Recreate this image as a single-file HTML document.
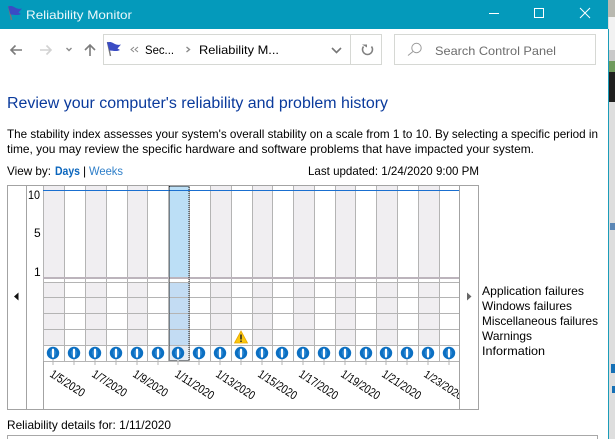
<!DOCTYPE html>
<html><head><meta charset="utf-8"><style>
html,body{margin:0;padding:0;width:615px;height:439px;overflow:hidden;background:#fff}
svg{display:block}
text{font-family:"Liberation Sans",sans-serif;font-size:12px;fill:#000}
</style></head><body>
<svg width="615" height="439" viewBox="0 0 615 439" xmlns="http://www.w3.org/2000/svg">
<defs>
<g id="i"><path d="M0 6V12" stroke="#b5b5b5" stroke-width="1"/><circle r="6.2" fill="#0b6fc2"/><circle r="3.2" fill="#2a86d2"/><rect x="-1.1" y="-4.4" width="2.2" height="9" rx="1" fill="#fff"/></g>
<g id="fl"><path d="M2.5 1L5.5 15" stroke="#777" stroke-width="1.4" fill="none"/><path d="M2 1.5C6 0 8 2 10 3C12 4 14 4 16 3.5L12.5 7.5L15 9C11 11 8 9.5 4.5 9.5Z" fill="#3a4cc4"/></g>
</defs>
<rect width="615" height="439" fill="#fff"/>
<!-- outside strip -->
<rect x="608" y="0" width="7" height="439" fill="#dedede"/>
<rect x="608" y="0" width="7" height="17" fill="#b9b9b0"/>
<rect x="609" y="17" width="6" height="33" fill="#f2f2f2"/>
<rect x="609" y="50" width="6" height="11" fill="#c9c9c9"/>
<rect x="609" y="61" width="6" height="11" fill="#6f9a5c"/>
<rect x="609" y="72" width="6" height="30" fill="#20201f"/>
<rect x="610" y="223" width="5" height="7" fill="#5b86b5"/>
<rect x="611" y="364" width="4" height="9" fill="#1670b5"/>
<rect x="612" y="386" width="3" height="7" fill="#1670b5"/>
<rect x="608" y="29" width="1" height="410" fill="#1b9cb8"/>
<!-- title bar -->
<rect width="608" height="29" fill="#049abb"/>
<use href="#fl" x="6" y="5"/>
<text x="26" y="19" textLength="106" lengthAdjust="spacingAndGlyphs" style="fill:#eef8fb">Reliability Monitor</text>
<path d="M489 13.5H499" stroke="#fff" fill="none"/>
<rect x="534.5" y="8.5" width="9" height="9" stroke="#fff" fill="none"/>
<path d="M580 8L590 18M590 8L580 18" stroke="#fff" fill="none"/>
<!-- nav -->
<path d="M22 50H11M15.5 45.5L11 50L15.5 54.5" stroke="#7c7c7c" stroke-width="1.6" fill="none"/>
<path d="M40 50H51M46.500 45.500L51 50L46.500 54.500" stroke="#d2d2d2" stroke-width="1.600" fill="none"/>
<path d="M66.500 48L69 50.500L71.500 48" stroke="#8a8a8a" stroke-width="1.400" fill="none"/>
<path d="M90 56V45M85 50L90 45L95 50" stroke="#7c7c7c" stroke-width="1.600" fill="none"/>
<rect x="103.500" y="34.500" width="278" height="30" fill="#fff" stroke="#d6d8d4"/>
<path d="M350.500 35V64" stroke="#d6d8d4"/>
<use href="#fl" x="105" y="41"/>
<path d="M134 47L131 49.500L134 52M138 47L135 49.500L138 52" stroke="#8a8a8a" fill="none"/>
<text x="145" y="54" textLength="29" lengthAdjust="spacingAndGlyphs">Sec...</text>
<path d="M186.500 47L189.500 49.500L186.500 52" stroke="#8a8a8a" stroke-width="1.400" fill="none"/>
<text x="199" y="54" textLength="80" lengthAdjust="spacingAndGlyphs">Reliability M...</text>
<path d="M332 48L336.500 52.500L341 48" stroke="#777" stroke-width="1.600" fill="none"/>
<path d="M371.500 46.500A5 5 0 1 1 363.500 46.500" stroke="#808080" stroke-width="1.600" fill="none"/>
<path d="M362 44.500H367V47.500Z" fill="#808080"/>
<rect x="394.500" y="34.500" width="201" height="30" fill="#fff" stroke="#d6d8d4"/>
<circle cx="416.500" cy="48" r="4.700" fill="none" stroke="#9a9a9a"/>
<path d="M413 51.500L408 55.500" stroke="#9a9a9a" fill="none"/>
<text x="435" y="55" textLength="121" lengthAdjust="spacingAndGlyphs" style="fill:#6d6d6d">Search Control Panel</text>
<!-- headings -->
<text x="7" y="108" textLength="381" lengthAdjust="spacingAndGlyphs" style="font-size:15.500px;fill:#0a3a9c">Review your computer's reliability and problem history</text>
<text x="7" y="138" textLength="591" lengthAdjust="spacingAndGlyphs">The stability index assesses your system's overall stability on a scale from 1 to 10. By selecting a specific period in</text>
<text x="7" y="153" textLength="527" lengthAdjust="spacingAndGlyphs">time, you may review the specific hardware and software problems that have impacted your system.</text>
<text x="7" y="175" textLength="44" lengthAdjust="spacingAndGlyphs">View by:</text>
<text x="55" y="175" textLength="25" lengthAdjust="spacingAndGlyphs" style="fill:#0b66bd;font-weight:bold">Days</text>
<text x="83" y="175">|</text>
<text x="89" y="175" textLength="34" lengthAdjust="spacingAndGlyphs" style="fill:#2f7fc9">Weeks</text>
<text x="308" y="175" textLength="171" lengthAdjust="spacingAndGlyphs">Last updated: 1/24/2020 9:00 PM</text>
<!-- chart columns -->
<g fill="#f0eef1">
<rect x="43" y="186" width="21" height="175"/><rect x="85" y="186" width="21" height="175"/><rect x="127" y="186" width="20" height="175"/>
<rect x="210" y="186" width="21" height="175"/><rect x="252" y="186" width="20" height="175"/><rect x="293" y="186" width="21" height="175"/><rect x="335" y="186" width="20" height="175"/><rect x="376" y="186" width="21" height="175"/><rect x="418" y="186" width="21" height="175"/>
</g>
<rect x="169" y="186" width="20" height="92" fill="#bcdff6"/>
<rect x="169" y="282" width="20" height="63" fill="#c3dcf3"/>
<rect x="169" y="345" width="20" height="16" fill="#e4ecf4"/>
<g fill="#fff"><rect x="43" y="345" width="126" height="16"/><rect x="189" y="345" width="270" height="16"/><rect x="43" y="279" width="416" height="3"/></g>
<g stroke="#b4b4b4" fill="none">
<path d="M43.500 186V361M64.500 186V361M85.500 186V361M106.500 186V361M127.500 186V361M147.500 186V361M168.500 186V361M189.500 186V361M210.500 186V361M231.500 186V361M252.500 186V361M272.500 186V361M293.500 186V361M314.500 186V361M335.500 186V361M355.500 186V361M376.500 186V361M397.500 186V361M418.500 186V361M439.500 186V361"/>
<path d="M43 282.500H459M43 297.500H459M43 313.500H459M43 329.500H459M43 345.500H459M43 361.500H459"/>
<path d="M43 278H459" stroke="#bcb4bc" stroke-width="2"/>
</g>
<path d="M43 190.500H459" stroke="#1a6fd0" fill="none"/>
<rect x="7.500" y="185.500" width="471" height="224" fill="none" stroke="#a3a3a3"/>
<path d="M26.500 186V409M43.500 361V409M459.500 186V409" stroke="#a3a3a3" fill="none"/>
<rect x="169.500" y="186.500" width="19.500" height="174" fill="none" stroke="#222" stroke-dasharray="1 1"/>
<text x="28" y="199" textLength="12" lengthAdjust="spacingAndGlyphs">10</text>
<text x="34" y="237">5</text>
<text x="34" y="276">1</text>
<path d="M18.500 292.500L14 296.500L18.500 300.500Z" fill="#111"/>
<path d="M467 292.500L471.500 296.500L467 300.500Z" fill="#666"/>
<!-- info icons -->
<use href="#i" x="53" y="353"/><use href="#i" x="74" y="353"/><use href="#i" x="95" y="353"/><use href="#i" x="116" y="353"/><use href="#i" x="137" y="353"/><use href="#i" x="158" y="353"/><use href="#i" x="178" y="353"/><use href="#i" x="199" y="353"/><use href="#i" x="220" y="353"/><use href="#i" x="241" y="353"/><use href="#i" x="262" y="353"/><use href="#i" x="282" y="353"/><use href="#i" x="303" y="353"/><use href="#i" x="324" y="353"/><use href="#i" x="345" y="353"/><use href="#i" x="366" y="353"/><use href="#i" x="386" y="353"/><use href="#i" x="407" y="353"/><use href="#i" x="428" y="353"/><use href="#i" x="449" y="353"/>
<!-- warning -->
<path d="M241 331L247.500 343H234.500Z" fill="#fbc70e" stroke="#e8a800" stroke-width="0.800"/>
<path d="M241 334.500V339.500M241 340.500V342" stroke="#222" stroke-width="1.500"/>
<!-- dates -->
<g style="font-size:11px">
<text transform="translate(49 376) rotate(33)" textLength="39" lengthAdjust="spacingAndGlyphs">1/5/2020</text>
<text transform="translate(91 376) rotate(33)" textLength="39" lengthAdjust="spacingAndGlyphs">1/7/2020</text>
<text transform="translate(132 376) rotate(33)" textLength="39" lengthAdjust="spacingAndGlyphs">1/9/2020</text>
<text transform="translate(174 376) rotate(33)" textLength="44" lengthAdjust="spacingAndGlyphs">1/11/2020</text>
<text transform="translate(215 376) rotate(33)" textLength="44" lengthAdjust="spacingAndGlyphs">1/13/2020</text>
<text transform="translate(257 376) rotate(33)" textLength="44" lengthAdjust="spacingAndGlyphs">1/15/2020</text>
<text transform="translate(298 376) rotate(33)" textLength="44" lengthAdjust="spacingAndGlyphs">1/17/2020</text>
<text transform="translate(340 376) rotate(33)" textLength="44" lengthAdjust="spacingAndGlyphs">1/19/2020</text>
<text transform="translate(381 376) rotate(33)" textLength="44" lengthAdjust="spacingAndGlyphs">1/21/2020</text>
</g>
<svg x="400" y="362" width="59" height="47" viewBox="400 362 59 47"><text transform="translate(423 376) rotate(33)" textLength="44" lengthAdjust="spacingAndGlyphs" style="font-size:11px">1/23/2020</text></svg>
<!-- legend -->
<text x="482" y="295" textLength="102" lengthAdjust="spacingAndGlyphs">Application failures</text>
<text x="482" y="310" textLength="90" lengthAdjust="spacingAndGlyphs">Windows failures</text>
<text x="482" y="325" textLength="116" lengthAdjust="spacingAndGlyphs">Miscellaneous failures</text>
<text x="482" y="340" textLength="50" lengthAdjust="spacingAndGlyphs">Warnings</text>
<text x="482" y="355" textLength="63" lengthAdjust="spacingAndGlyphs">Information</text>
<!-- bottom -->
<text x="7" y="429" textLength="164" lengthAdjust="spacingAndGlyphs">Reliability details for: 1/11/2020</text>
<path d="M7 435.500H597.500V439M7.500 435.500V439" stroke="#a8a8a8" fill="none"/>
</svg>
</body></html>
